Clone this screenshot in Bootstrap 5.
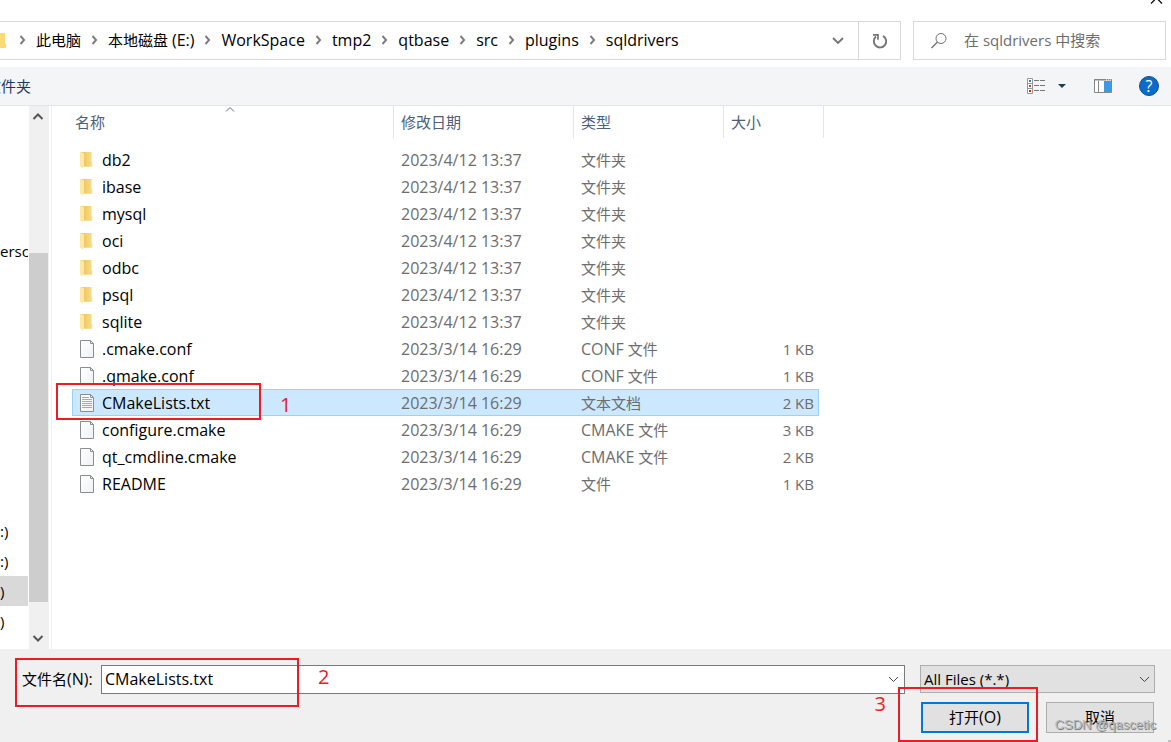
<!DOCTYPE html>
<html lang="zh-CN">
<head>
<meta charset="utf-8">
<meta name="viewport" content="width=device-width, initial-scale=1">
<title>打开</title>
<link href="https://cdn.jsdelivr.net/npm/bootstrap@5.3.0/dist/css/bootstrap.min.css" rel="stylesheet">
<style>
  body { font-family: "Open Sans", "Noto Sans CJK SC", sans-serif; font-size: 15px; line-height: 20px; color: #000; background: #fff; }
  svg { display: block; flex: none; }
  button, input, select { font: inherit; color: inherit; border-radius: 0; }
  .dialog { min-height: 100vh; }
  .latin { font-size: 16px; }

  .title-strip { height: 21px; padding-right: 8px; }
  .address-row { gap: 12px; padding-right: 5px; }
  .address-bar, .search-bar { height: 39px; border: 1px solid #d9d9d9; }
  .address-bar { border-left: 0; }
  .path-list { padding: 0 0 2px 17px; gap: 8px; }
  .path-list li { gap: 8px; white-space: nowrap; }
  .path-list a { color: #000; text-decoration: none; }
  .plain-btn { background: none; border: 0; padding: 0; }
  .drop-btn { width: 41px; }
  .reload-btn { width: 42px; border-left: 1px solid #d9d9d9; }
  .search-bar { width: 253px; padding-left: 17px; gap: 17px; }
  .search-bar input { border: 0; padding: 0 0 2px; outline: 0; min-width: 0; background: none; }
  .search-bar input::placeholder { color: #6d6d6d; opacity: 1; }

  .tool-strip { height: 39px; margin-top: 7px; background: #f4f5f7; border-bottom: 1px solid #e3e6e8; padding-right: 12px; }
  .new-folder { width: 31px; overflow: hidden; color: #1e395b; white-space: nowrap; }
  .more-btn { margin: 0 28px 0 12px; }
  .help-btn { margin-left: 27px; }

  .side-tree { width: 28px; overflow: hidden; padding-top: 130px; margin-right: 1px; }
  .side-tree a { display: block; height: 30px; line-height: 30px; color: #000; text-decoration: none; white-space: nowrap; }
  .side-tree .drives { margin-top: 250px; }
  .side-tree .current { background: #d9d9d9; }
  .scroll-track { width: 20px; background: #f0f0f0; padding: 7px 0; }
  .scroll-track svg { margin-left: 3px; }
  .scroll-thumb { width: 19px; height: 349px; background: #cdcdcd; margin-top: 131px; }
  .file-pane { margin-left: 2px; padding-left: 20px; border-left: 1px solid #f0f0f0; overflow: hidden; }

  .file-table { width: 752px; table-layout: fixed; border-collapse: separate; border-spacing: 0; color: #6d6d6d; }
  .file-table th { height: 32px; padding: 0 0 0 7px; font-weight: 400; color: #4c607a; border-right: 1px solid #e3e6e8; position: relative; }
  .file-table th:first-child { padding-left: 3px; }
  .file-table th svg { position: absolute; top: 0; left: 153px; }
  .file-table .spacer td { height: 8px; }
  .file-table td { height: 27px; padding: 0 0 0 7px; white-space: nowrap; }
  .file-table td.fname { padding-left: 8px; color: #000; position: relative; }
  .file-table td.fsize { padding: 0 5px 0 0; text-align: right; }
  .fname div { gap: 8px; }
  .picked td:not(.tail) { background: #cce8ff; border: 1px solid #99d1ff; border-width: 1px 0; }
  .picked td.fname { border-left-width: 1px; padding-left: 7px; }
  .picked td.fsize { border-right-width: 1px; padding-right: 4px; }

  .bottom-panel { background: #f0f0f0; padding: 16px 16px 9px 22px; }
  .name-line { gap: 15px; }
  .name-line label { width: 79px; padding-bottom: 2px; white-space: nowrap; }
  .name-combo { height: 29px; background: #fff; border: 1px solid #7a7a7a; }
  .name-combo input { border: 0; outline: 0; padding: 0 0 1px 3px; min-width: 0; background: none; }
  .name-combo button { width: 21px; }
  .type-box { width: 235px; }
  .type-box select { height: 28px; padding: 0 4px 0 3px; border: 1px solid #adadad; background: #e1e1e1; appearance: none; }
  .type-box svg { position: absolute; right: 5px; top: 11px; pointer-events: none; }
  .action-line { gap: 17px; margin-top: 8px; padding-right: 1px; }
  .act-btn { width: 108px; height: 31px; padding: 0 0 2px; background: #e1e1e1; border: 1px solid #adadad; }
  .act-btn.main-act { border: 2px solid #0078d7; }

  .mark-box { position: absolute; border: 2px solid #ed1c24; pointer-events: none; z-index: 2; }
  .mark-num { position: absolute; color: #ed1c24; font-size: 20px; line-height: 24px; z-index: 2; }
  .box-one { left: -17px; top: -7px; width: 205px; height: 37px; }
  .num-one { left: 207px; top: 3px; }
  .box-two { left: 15px; top: 9px; width: 284px; height: 49px; }
  .num-two { left: 318px; top: 16px; }
  .box-three { right: 133px; bottom: 0; width: 140px; height: 55px; }
  .num-three { right: 285px; top: 43px; }
  .stamp { position: absolute; right: 15px; bottom: 8px; font: 14px/18px "Liberation Sans", sans-serif; font-size: 13px; color: #b8b8b8; text-shadow: 1px 1px 0 #808080; z-index: 3; }
  .grip { position: absolute; right: 0; bottom: 0; width: 3px; height: 2px; background: #bfbfbf; }
</style>
</head>
<body>
<svg width="0" height="0" class="position-absolute" aria-hidden="true">
  <defs>
    <linearGradient id="gold" x1="0" x2="1"><stop offset="0" stop-color="#e9c25d"/><stop offset="1" stop-color="#fbdc86"/></linearGradient>
    <linearGradient id="paper" x1="0" x2="1" y2="1"><stop offset="0" stop-color="#fff"/><stop offset="1" stop-color="#eff1f2"/></linearGradient>
    <symbol id="sep" viewBox="0 0 11 12"><path d="M3.500 2l3.600 4-3.600 4" fill="none" stroke="#7b7b7b" stroke-width="1.900"/></symbol>
    <symbol id="folder" viewBox="0 0 14 18"><path d="M1 1h10.500v10.200l.7.300v4.300H4z" fill="url(#gold)"/><path d="M0 1h1l3 1.200v13.300L2.700 17.500 0 15.500z" fill="#ffe9a2"/></symbol>
    <symbol id="doc" viewBox="0 0 14 18"><path d="M.5.500h10l3 3v14H.500z" fill="url(#paper)" stroke="#8b8e90"/><path d="M10.500.500v3h3" fill="none" stroke="#8b8e90"/></symbol>
    <symbol id="textdoc" viewBox="0 0 14 18"><use href="#doc"/><path d="M2 3.500h7M2 5.500h10M2 7.500h10M2 9.500h10M2 11.500h10M2 13.500h10" stroke="#a8a8a8"/></symbol>
  </defs>
</svg>

<div class="dialog d-flex flex-column position-relative">
  <div class="title-strip d-flex justify-content-end">
    <button class="plain-btn d-flex align-items-start" aria-label="关闭"><svg width="13" height="4" viewBox="0 0 13 4"><path d="M1 3.500L6.500-2 12 3.500" fill="none" stroke="#000" stroke-width="1.200"/></svg></button>
  </div>

  <div class="address-row d-flex">
    <nav class="address-bar d-flex flex-grow-1 align-items-center position-relative" aria-label="路径">
      <svg class="position-absolute start-0" width="6" height="15" viewBox="0 0 6 15"><path d="M0 0h5v10l1 1v4H0z" fill="#fbd977"/></svg>
      <ol class="path-list list-unstyled d-flex flex-grow-1 mb-0">
        <li class="d-flex align-items-center"><svg width="11" height="12"><use href="#sep"/></svg><a href="#">此电脑</a></li>
        <li class="d-flex align-items-center"><svg width="11" height="12"><use href="#sep"/></svg><a href="#">本地磁盘 <span class="latin">(E:)</span></a></li>
        <li class="d-flex align-items-center"><svg width="11" height="12"><use href="#sep"/></svg><a class="latin" href="#">WorkSpace</a></li>
        <li class="d-flex align-items-center"><svg width="11" height="12"><use href="#sep"/></svg><a class="latin" href="#">tmp2</a></li>
        <li class="d-flex align-items-center"><svg width="11" height="12"><use href="#sep"/></svg><a class="latin" href="#">qtbase</a></li>
        <li class="d-flex align-items-center"><svg width="11" height="12"><use href="#sep"/></svg><a class="latin" href="#">src</a></li>
        <li class="d-flex align-items-center"><svg width="11" height="12"><use href="#sep"/></svg><a class="latin" href="#">plugins</a></li>
        <li class="d-flex align-items-center"><svg width="11" height="12"><use href="#sep"/></svg><a class="latin" href="#">sqldrivers</a></li>
      </ol>
      <button class="plain-btn drop-btn d-flex justify-content-center" aria-label="历史"><svg width="12" height="8" viewBox="0 0 12 8"><path d="M1 1l5 5 5-5" fill="none" stroke="#757575" stroke-width="1.900"/></svg></button>
      <button class="plain-btn reload-btn h-100 d-flex align-items-center justify-content-center" aria-label="刷新"><svg width="16" height="16" viewBox="0 0 16 16"><path d="M11 2.800A6.200 6.200 0 1 1 4 3.500" fill="none" stroke="#757575" stroke-width="1.900"/><path d="M1 1.800H6v5" fill="none" stroke="#757575" stroke-width="1.700"/></svg></button>
    </nav>
    <div class="search-bar d-flex align-items-center">
      <svg width="16" height="16" viewBox="0 0 16 16"><circle cx="10" cy="5.500" r="5" fill="none" stroke="#6d6d6d"/><path d="M6.500 9L.5 15" stroke="#6d6d6d" stroke-width="1.200"/></svg>
      <input class="flex-grow-1" type="text" aria-label="搜索" placeholder="在 sqldrivers 中搜索">
    </div>
  </div>

  <div class="tool-strip d-flex align-items-center">
    <button class="plain-btn new-folder d-flex justify-content-end me-auto">文件夹</button>
    <button class="plain-btn" aria-label="视图"><svg width="19" height="16" viewBox="0 0 19 16"><path d="M.5.500h5v15h-5zM.5 5.500h5M.5 10.500h5" fill="#fff" stroke="#969696"/><path d="M7 2.500h5m1 0h5M7 7.500h5m1 0h5M7 12.500h5m1 0h5" stroke="#777"/><path d="M2 2h2v2H2z" fill="#3d78b4"/><path d="M2 7h2v2H2z" fill="#a05030"/><path d="M2 12h2v2H2z" fill="#d02020"/></svg></button>
    <button class="plain-btn more-btn" aria-label="更多视图"><svg width="8" height="4" viewBox="0 0 8 4"><path d="M0 0h8L4 4z" fill="#1e395b"/></svg></button>
    <button class="plain-btn" aria-label="预览窗格"><svg width="18" height="14" viewBox="0 0 18 14"><path d="M.5.500h17v13H.500z" fill="#fff" stroke="#858585"/><path d="M0 1h18M4.500 2v11" stroke="#858585"/><path d="M10 2h7v11h-7z" fill="#3e98e3"/><path d="M12 1h1m1 0h1m1 0h1" stroke="#fff"/></svg></button>
    <button class="plain-btn help-btn" aria-label="帮助"><svg width="20" height="20" viewBox="0 0 20 20"><circle cx="10" cy="10" r="9.500" fill="#0b6bcb" stroke="#164d85"/><text x="10" y="15.500" text-anchor="middle" fill="#fff" font-size="16">?</text></svg></button>
  </div>

  <main class="d-flex flex-grow-1">
    <nav class="side-tree flex-shrink-0" aria-label="文件夹树">
      <a href="#">ersc</a>
      <div class="drives"><a href="#">:)</a><a href="#">:)</a><a href="#" class="current">)</a><a href="#">)</a></div>
    </nav>
    <div class="scroll-track d-flex flex-column flex-shrink-0" aria-hidden="true">
      <svg width="12" height="9" viewBox="0 0 12 9"><path d="M1.500 6L6 1.500 10.500 6" fill="none" stroke="#555" stroke-width="2"/></svg>
      <div class="scroll-thumb"></div>
      <svg class="mt-auto" width="12" height="7" viewBox="0 0 12 7"><path d="M1.500 1L6 5.500 10.500 1" fill="none" stroke="#555" stroke-width="2"/></svg>
    </div>
    <section class="file-pane flex-grow-1">
      <table class="file-table">
        <colgroup><col style="width:322px"><col style="width:180px"><col style="width:150px"><col style="width:95px"><col style="width:5px"></colgroup>
        <thead><tr><th scope="col">名称<svg width="10" height="6" viewBox="0 0 10 6"><path d="M1 5.500l4-4 4 4" fill="none" stroke="#6d6d6d"/></svg></th><th scope="col">修改日期</th><th scope="col">类型</th><th scope="col" colspan="2">大小</th></tr></thead>
        <tbody>
          <tr class="spacer" aria-hidden="true"><td colspan="5"></td></tr>
          <tr><td class="fname latin"><div class="d-flex align-items-center"><svg width="14" height="18"><use href="#folder"/></svg>db2</div></td><td class="latin">2023/4/12 13:37</td><td>文件夹</td><td class="fsize"></td><td class="tail p-0"></td></tr>
          <tr><td class="fname latin"><div class="d-flex align-items-center"><svg width="14" height="18"><use href="#folder"/></svg>ibase</div></td><td class="latin">2023/4/12 13:37</td><td>文件夹</td><td class="fsize"></td><td class="tail p-0"></td></tr>
          <tr><td class="fname latin"><div class="d-flex align-items-center"><svg width="14" height="18"><use href="#folder"/></svg>mysql</div></td><td class="latin">2023/4/12 13:37</td><td>文件夹</td><td class="fsize"></td><td class="tail p-0"></td></tr>
          <tr><td class="fname latin"><div class="d-flex align-items-center"><svg width="14" height="18"><use href="#folder"/></svg>oci</div></td><td class="latin">2023/4/12 13:37</td><td>文件夹</td><td class="fsize"></td><td class="tail p-0"></td></tr>
          <tr><td class="fname latin"><div class="d-flex align-items-center"><svg width="14" height="18"><use href="#folder"/></svg>odbc</div></td><td class="latin">2023/4/12 13:37</td><td>文件夹</td><td class="fsize"></td><td class="tail p-0"></td></tr>
          <tr><td class="fname latin"><div class="d-flex align-items-center"><svg width="14" height="18"><use href="#folder"/></svg>psql</div></td><td class="latin">2023/4/12 13:37</td><td>文件夹</td><td class="fsize"></td><td class="tail p-0"></td></tr>
          <tr><td class="fname latin"><div class="d-flex align-items-center"><svg width="14" height="18"><use href="#folder"/></svg>sqlite</div></td><td class="latin">2023/4/12 13:37</td><td>文件夹</td><td class="fsize"></td><td class="tail p-0"></td></tr>
          <tr><td class="fname latin"><div class="d-flex align-items-center"><svg width="14" height="18"><use href="#doc"/></svg>.cmake.conf</div></td><td class="latin">2023/3/14 16:29</td><td><span class="latin">CONF</span> 文件</td><td class="fsize">1 KB</td><td class="tail p-0"></td></tr>
          <tr><td class="fname latin"><div class="d-flex align-items-center"><svg width="14" height="18"><use href="#doc"/></svg>.qmake.conf</div></td><td class="latin">2023/3/14 16:29</td><td><span class="latin">CONF</span> 文件</td><td class="fsize">1 KB</td><td class="tail p-0"></td></tr>
          <tr class="picked"><td class="fname latin"><div class="d-flex align-items-center"><svg width="14" height="18"><use href="#textdoc"/></svg>CMakeLists.txt</div><span class="mark-box box-one"></span><span class="mark-num num-one">1</span></td><td class="latin">2023/3/14 16:29</td><td>文本文档</td><td class="fsize">2 KB</td><td class="tail p-0"></td></tr>
          <tr><td class="fname latin"><div class="d-flex align-items-center"><svg width="14" height="18"><use href="#doc"/></svg>configure.cmake</div></td><td class="latin">2023/3/14 16:29</td><td><span class="latin">CMAKE</span> 文件</td><td class="fsize">3 KB</td><td class="tail p-0"></td></tr>
          <tr><td class="fname latin"><div class="d-flex align-items-center"><svg width="14" height="18"><use href="#doc"/></svg>qt_cmdline.cmake</div></td><td class="latin">2023/3/14 16:29</td><td><span class="latin">CMAKE</span> 文件</td><td class="fsize">2 KB</td><td class="tail p-0"></td></tr>
          <tr><td class="fname latin"><div class="d-flex align-items-center"><svg width="14" height="18"><use href="#doc"/></svg>README</div></td><td class="latin">2023/3/14 16:29</td><td>文件</td><td class="fsize">1 KB</td><td class="tail p-0"></td></tr>
        </tbody>
      </table>
    </section>
  </main>

  <footer class="bottom-panel position-relative">
    <div class="name-line d-flex">
      <div class="d-flex flex-grow-1 align-items-center">
        <label for="fileName">文件名<span class="latin">(N):</span></label>
        <div class="name-combo d-flex flex-grow-1">
          <input id="fileName" class="flex-grow-1 latin" type="text" value="CMakeLists.txt">
          <button class="plain-btn d-flex align-items-center justify-content-center" aria-label="最近的文件名"><svg width="11" height="7" viewBox="0 0 11 7"><path d="M1 1l4.500 4.500L10 1" fill="none" stroke="#444"/></svg></button>
        </div>
      </div>
      <div class="type-box position-relative">
        <select class="w-100" aria-label="文件类型"><option>All Files (*.*)</option></select>
        <svg width="11" height="7" viewBox="0 0 11 7"><path d="M1 1l4.500 4.500L10 1" fill="none" stroke="#444"/></svg>
      </div>
    </div>
    <div class="action-line d-flex justify-content-end">
      <button class="act-btn main-act">打开<span class="latin">(O)</span></button>
      <button class="act-btn">取消</button>
    </div>
    <span class="mark-box box-two"></span><span class="mark-num num-two">2</span>
    <span class="mark-box box-three"></span><span class="mark-num num-three">3</span>
    <span class="stamp">CSDN @qascetic</span>
    <span class="grip"></span>
  </footer>
</div>
<script src="https://cdn.jsdelivr.net/npm/bootstrap@5.3.0/dist/js/bootstrap.bundle.min.js"></script>
</body>
</html>
